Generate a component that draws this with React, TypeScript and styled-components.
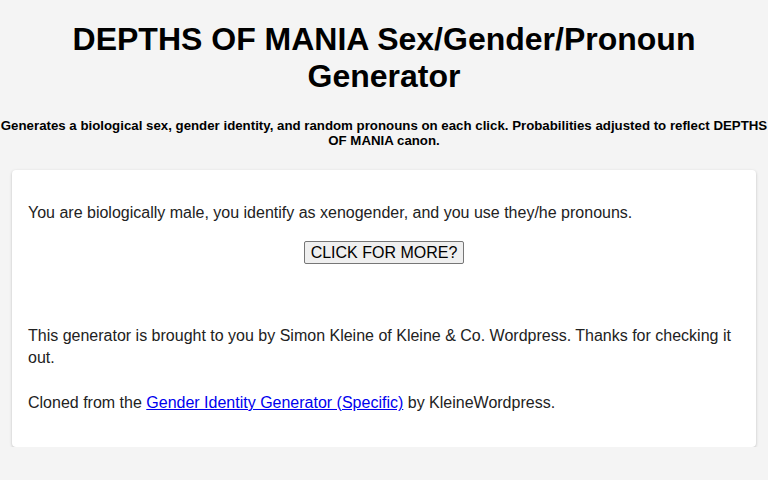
import React from "react";
import styled, { createGlobalStyle } from "styled-components";

const Global = createGlobalStyle`
  html, body { margin: 0; padding: 0; background: #f4f4f4; }
  body { font-family: "Liberation Sans", Arial, sans-serif; color: #111; }
`;

const Title = styled.h1`
  margin: 21px 0 0;
  font-size: 32px;
  line-height: 37px;
  font-weight: bold;
  text-align: center;
  color: #000;
`;

const Subtitle = styled.h5`
  margin: 23px 0 0;
  font-size: 13.28px;
  line-height: 15px;
  font-weight: bold;
  text-align: center;
  color: #000;
`;

const Card = styled.div`
  margin: 22px 12px 0;
  background: #fff;
  border-radius: 4px;
  box-shadow: 0 1px 3px rgba(0, 0, 0, 0.22);
  padding: 32px 16px 33px;
`;

const Para = styled.p<{ $top?: number }>`
  margin: ${(p) => p.$top ?? 0}px 0 0;
  font-size: 16px;
  line-height: 22px;
  color: #222;
`;

const ButtonRow = styled.div`
  margin-top: 17px;
  display: flex;
  justify-content: center;
`;

const MoreButton = styled.button`
  font-family: "Liberation Sans", Arial, sans-serif;
  font-size: 16px;
  line-height: 19px;
  height: 23px;
  padding: 1px 6px;
  color: #000;
  background: #efefef;
  border: 1px solid #767676;
  border-radius: 2px;
  cursor: pointer;
`;

const Link = styled.a`
  color: #0000ee;
  text-decoration: underline;
`;

export default function App() {
  return (
    <>
      <Global />
      <Title>
        DEPTHS OF MANIA Sex/Gender/Pronoun
        <br />
        Generator
      </Title>
      <Subtitle>
        Generates a biological sex, gender identity, and random pronouns on each click. Probabilities adjusted to reflect DEPTHS OF MANIA canon.
      </Subtitle>
      <Card>
        <Para>
          You are biologically male, you identify as xenogender, and you use they/he pronouns.
        </Para>
        <ButtonRow>
          <MoreButton>CLICK FOR MORE?</MoreButton>
        </ButtonRow>
        <Para $top={61}>
          This generator is brought to you by Simon Kleine of Kleine &amp; Co. Wordpress. Thanks for checking it out.
        </Para>
        <Para $top={23}>
          Cloned from the <Link href="#">Gender Identity Generator (Specific)</Link> by KleineWordpress.
        </Para>
      </Card>
    </>
  );
}
